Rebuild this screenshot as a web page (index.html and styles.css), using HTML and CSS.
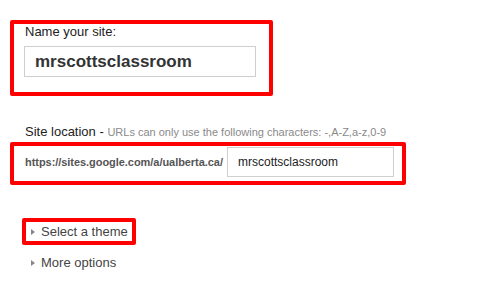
FILE: index.html
```
<!DOCTYPE html>
<html>
<head>
<meta charset="utf-8">
<link rel="stylesheet" href="styles.css">
</head>
<body>
<div class="page">
  <div class="name-box">
    <div class="label">Name your site:</div>
    <div class="name-input">mrscottsclassroom</div>
  </div>
  <div class="loc-label">Site location - <span class="hint">URLs can only use the following characters: -,A-Z,a-z,0-9</span></div>
  <div class="loc-box">
    <span class="url">https://sites.google.com/a/ualberta.ca/</span>
    <div class="loc-input">mrscottsclassroom</div>
  </div>
  <div class="theme-box">
    <div class="toggle"><span class="tri"></span><span>Select a theme</span></div>
  </div>
  <div class="more">
    <div class="toggle"><span class="tri"></span><span>More options</span></div>
  </div>
</div>
</body>
</html>
```
FILE: styles.css
```
html, body {
  margin: 0;
  padding: 0;
  background: #fff;
}
body {
  font-family: "Liberation Sans", Arial, sans-serif;
  width: 498px;
  height: 286px;
  overflow: hidden;
}
.page {
  display: flex;
  flex-direction: column;
  align-items: flex-start;
  padding-top: 20px;
}
.name-box {
  margin-left: 10px;
  width: 245px;
  height: 68px;
  border: 4px solid #ff0000;
  border-radius: 2px;
  padding-left: 10px;
}
.label {
  font-size: 13px;
  line-height: 16px;
  color: #222;
  padding-left: 1px;
}
.name-input {
  margin-top: 6px;
  width: 220px;
  height: 29px;
  border: 1px solid #cfcfcf;
  padding-left: 10px;
  font-weight: bold;
  font-size: 17px;
  line-height: 29px;
  color: #333;
}
.loc-label {
  margin-top: 28px;
  margin-left: 25px;
  font-size: 13px;
  line-height: 16px;
  color: #222;
}
.hint {
  font-size: 11px;
  color: #8a8a8a;
}
.loc-box {
  margin-top: 2px;
  margin-left: 10px;
  width: 369px;
  height: 30px;
  padding: 1px 8px 4px 11px;
  border: 4px solid #ff0000;
  border-radius: 2px;
  display: flex;
  align-items: center;
  justify-content: space-between;
}
.url {
  font-size: 11px;
  font-weight: bold;
  color: #555;
  white-space: nowrap;
  letter-spacing: -0.05px;
}
.loc-input {
  width: 155px;
  height: 28px;
  border: 1px solid #cfcfcf;
  padding-left: 10px;
  font-size: 12px;
  line-height: 28px;
  color: #222;
}
.theme-box {
  margin-top: 33px;
  margin-left: 22px;
  width: 101px;
  height: 19px;
  padding-left: 5px;
  border: 4px solid #ff0000;
  border-radius: 2px;
  display: flex;
  align-items: center;
}
.more {
  margin-top: 8px;
  margin-left: 26px;
  padding-left: 5px;
  height: 19px;
  display: flex;
  align-items: center;
}
.toggle {
  display: flex;
  align-items: center;
  font-size: 13px;
  color: #444;
  white-space: nowrap;
}
.tri {
  width: 0;
  height: 0;
  border-top: 3.5px solid transparent;
  border-bottom: 3.5px solid transparent;
  border-left: 4px solid #888;
  margin-right: 6px;
}
```
